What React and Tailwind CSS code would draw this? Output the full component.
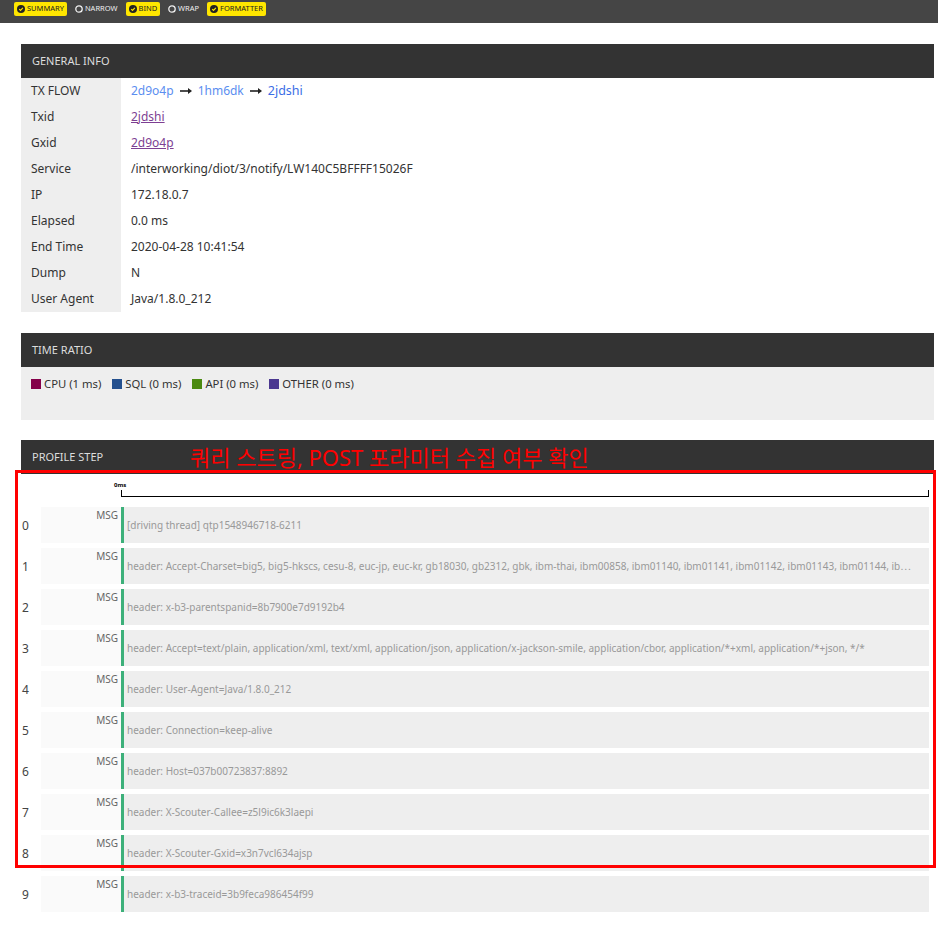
import React from 'react';

const font = { fontFamily: '"Noto Sans", "Noto Sans CJK KR", sans-serif' };

const toggles = [
  { name: 'SUMMARY', on: true },
  { name: 'NARROW', on: false },
  { name: 'BIND', on: true },
  { name: 'WRAP', on: false },
  { name: 'FORMATTER', on: true },
];

const info = [
  ['Txid', <a className="text-[#7d3f93] underline">2jdshi</a>],
  ['Gxid', <a className="text-[#7d3f93] underline">2d9o4p</a>],
  ['Service', '/interworking/diot/3/notify/LW140C5BFFFF15026F'],
  ['IP', '172.18.0.7'],
  ['Elapsed', '0.0 ms'],
  ['End Time', '2020-04-28 10:41:54'],
  ['Dump', 'N'],
  ['User Agent', 'Java/1.8.0_212'],
];

const legend = [
  ['CPU (1 ms)', 'bg-[#85004a]'],
  ['SQL (0 ms)', 'bg-[#24508e]'],
  ['API (0 ms)', 'bg-[#4b8a10]'],
  ['OTHER (0 ms)', 'bg-[#4b3790]'],
];

const steps = [
  '[driving thread] qtp1548946718-6211',
  'header: Accept-Charset=big5, big5-hkscs, cesu-8, euc-jp, euc-kr, gb18030, gb2312, gbk, ibm-thai, ibm00858, ibm01140, ibm01141, ibm01142, ibm01143, ibm01144, ib\u22ef',
  'header: x-b3-parentspanid=8b7900e7d9192b4',
  'header: Accept=text/plain, application/xml, text/xml, application/json, application/x-jackson-smile, application/cbor, application/*+xml, application/*+json, */*',
  'header: User-Agent=Java/1.8.0_212',
  'header: Connection=keep-alive',
  'header: Host=037b00723837:8892',
  'header: X-Scouter-Callee=z5l9ic6k3laepi',
  'header: X-Scouter-Gxid=x3n7vcl634ajsp',
  'header: x-b3-traceid=3b9feca986454f99',
];

const Check = ({ on }) =>
  on ? (
    <svg width="8" height="8" viewBox="0 0 8 8">
      <circle cx="4" cy="4" r="4" fill="#222" />
      <path d="M2.2 4.1 L3.5 5.3 L5.9 2.8" stroke="#ffe600" strokeWidth="1.2" fill="none" />
    </svg>
  ) : (
    <svg width="8" height="8" viewBox="0 0 8 8">
      <circle cx="4" cy="4" r="3.2" stroke="#eee" strokeWidth="1.3" fill="none" />
    </svg>
  );

const Arrow = () => (
  <svg width="12" height="8" viewBox="0 0 12 8">
    <path d="M0 4 H9" stroke="#222" strokeWidth="1.6" />
    <path d="M8 1 L12 4 L8 7 Z" fill="#222" />
  </svg>
);

const Header = ({ children }) => (
  <div className="h-[34px] bg-[#333333] text-[#dddddd] text-[11px] flex items-center pl-[11px]">{children}</div>
);

export default function App() {
  return (
    <div className="w-[938px] min-h-[946px] bg-white relative text-[#333]" style={font}>
      <div className="h-[23px] bg-[#454545] flex items-start pt-[2px] pl-[14px] gap-[8px]">
        {toggles.map(t => (
          <div
            key={t.name}
            className={`h-[14px] flex items-center gap-[2px] rounded-[2px] text-[7.5px] ${
              t.on ? 'bg-[#ffe600] text-[#222] px-[3px]' : 'text-[#eee] px-0'
            }`}
          >
            <Check on={t.on} />
            {t.name}
          </div>
        ))}
      </div>

      <div className="pl-[21px] pr-[4px] pt-[21px]">
        <Header>GENERAL INFO</Header>
        <div className="text-[12px]">
          <div className="flex h-[26px]">
            <div className="w-[100px] bg-[#eeeeee] pl-[10px] flex items-center">TX FLOW</div>
            <div className="pl-[10px] flex items-center gap-[6px]">
              <span className="text-[#5b8ef0]">2d9o4p</span>
              <Arrow />
              <span className="text-[#5b8ef0]">1hm6dk</span>
              <Arrow />
              <span className="text-[#3a6de6] text-[12.5px]">2jdshi</span>
            </div>
          </div>
          {info.map(([k, v]) => (
            <div key={k} className="flex h-[26px]">
              <div className="w-[100px] bg-[#eeeeee] pl-[10px] flex items-center">{k}</div>
              <div className="pl-[10px] flex items-center">{v}</div>
            </div>
          ))}
        </div>

        <div className="mt-[21px]">
          <Header>TIME RATIO</Header>
          <div className="h-[53px] bg-[#eeeeee] flex items-start pt-[9px] pl-[10px] gap-[11px] text-[11.3px]">
            {legend.map(([label, color]) => (
              <div key={label} className="flex items-center gap-[3px]">
                <span className={`w-[10px] h-[10px] ${color}`} />
                {label}
              </div>
            ))}
          </div>
        </div>

        <div className="mt-[20px]">
          <Header>PROFILE STEP</Header>
          <div className="relative h-[33px] pr-[5px]">
            <span className="absolute left-[93px] top-[7px] text-[6px] font-bold text-black">0ms</span>
            <div className="absolute left-[100px] right-[5px] top-[16px] h-[7px] border-l border-r border-b border-black" />
          </div>
          <div className="flex flex-col gap-[5px] pr-[5px] pb-[30px]">
            {steps.map((s, i) => (
              <div key={i} className="flex h-[36px]">
                <div className="w-[20px] flex items-center pl-[1px] text-[12px] text-[#444] pt-[1px]">{i}</div>
                <div className="w-[80px] bg-[#fafafa] text-right pr-[3px] text-[10px] text-[#666] leading-none pt-[3px]">MSG</div>
                <div className="w-[3px] bg-[#3db07a]" />
                <div className="flex-1 bg-[#eeeeee] flex items-center pl-[3px] text-[10px] text-[#999] whitespace-nowrap overflow-hidden pt-[1px]">
                  {s}
                </div>
              </div>
            ))}
          </div>
        </div>
      </div>

      <div className="absolute left-[190px] top-[443px] text-[22px] leading-[28px] text-[#ff0000]">
        쿼리 스트링, POST 포라미터 수집 여부 확인
      </div>
      <div className="absolute left-[15px] top-[470px] w-[921px] h-[398px] border-[3px] border-[#ff0000]" />
    </div>
  );
}
